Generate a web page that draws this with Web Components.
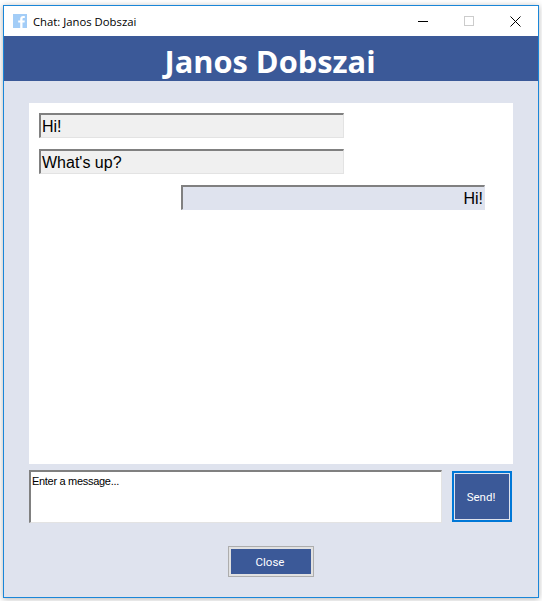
<!DOCTYPE html>
<html>
<head>
<meta charset="utf-8">
<title>Chat: Janos Dobszai</title>
<style>
  html, body { margin: 0; height: 100%; background: #fff; overflow: hidden; }
</style>
</head>
<body>
<chat-window title-text="Chat: Janos Dobszai" contact="Janos Dobszai">
  <chat-bubble>Hi!</chat-bubble>
  <chat-bubble>What's up?</chat-bubble>
  <chat-bubble own>Hi!</chat-bubble>
</chat-window>

<script>
class TitleBar extends HTMLElement {
  connectedCallback() {
    this.attachShadow({ mode: 'open' });
    this.shadowRoot.innerHTML = `
      <style>
        :host {
          display: flex;
          align-items: center;
          height: 30px;
          background: #fff;
          color: #000;
          font: 11.3px "Open Sans", "Noto Sans", sans-serif;
        }
        .icon { width: 14px; height: 14px; margin-left: 9px; margin-right: 6px; flex: none; }
        .text { flex: 1; padding-top: 1px; }
        .buttons { display: flex; }
        .btn { width: 46px; height: 30px; display: flex; align-items: center; justify-content: center; }
      </style>
      <svg class="icon" viewBox="0 0 14 14">
        <rect width="14" height="14" fill="#a3cdf7"/>
        <path d="M9.500 14V8.600h2l.3-2.200H9.500V5.100c0-.7.3-1.100 1.100-1.100h1.200V2.100c-.4-.1-1-.1-1.600-.1C8.400 2 7.200 3 7.200 4.900v1.500h-2v2.200h2V14z" fill="#fff"/>
      </svg>
      <span class="text"><slot></slot></span>
      <div class="buttons">
        <div class="btn"><svg width="10" height="10" viewBox="0 0 10 10"><path d="M0 5.500h10" stroke="#000" fill="none"/></svg></div>
        <div class="btn"><svg width="10" height="10" viewBox="0 0 10 10"><rect x=".5" y=".5" width="9" height="9" stroke="#ccc" fill="none"/></svg></div>
        <div class="btn"><svg width="11" height="11" viewBox="0 0 11 11"><path d="M.5.500l10 10M10.500.500l-10 10" stroke="#000" fill="none"/></svg></div>
      </div>
    `;
  }
}

class ChatBubble extends HTMLElement {
  connectedCallback() {
    this.attachShadow({ mode: 'open' });
    this.shadowRoot.innerHTML = `
      <style>
        :host {
          display: block;
          box-sizing: border-box;
          width: 305px;
          height: 25px;
          padding: 0 1px 0 1px;
          border-style: solid;
          border-width: 2px 1px 1px 2px;
          border-color: #808080 #e3e3e3 #e3e3e3 #808080;
          background: #f0f0f0;
          color: #000;
          font: 16px/23px "Liberation Sans", Arial, sans-serif;
        }
        :host([own]) {
          align-self: flex-end;
          width: 304px;
          margin-right: 18px;
          text-align: right;
          background: #dfe3ee;
          border-color: #808080 #dfe3ee #dfe3ee #808080;
        }
      </style>
      <slot></slot>
    `;
  }
}

class FlatButton extends HTMLElement {
  connectedCallback() {
    this.attachShadow({ mode: 'open' });
    this.shadowRoot.innerHTML = `
      <style>
        :host {
          display: flex;
          align-items: center;
          justify-content: center;
          box-sizing: border-box;
          padding-right: 2px;
          background: #3b5998;
          color: #fff;
          font: 11.5px Roboto, "Open Sans", sans-serif;
        }
      </style>
      <slot></slot>
    `;
  }
}

class ChatWindow extends HTMLElement {
  connectedCallback() {
    const title = this.getAttribute('title-text');
    const contact = this.getAttribute('contact');
    this.attachShadow({ mode: 'open' });
    this.shadowRoot.innerHTML = `
      <style>
        :host {
          display: flex;
          flex-direction: column;
          box-sizing: border-box;
          width: 536px;
          height: 593px;
          margin: 5px 0 0 3px;
          border: 1px solid #1a86d8;
          background: #dfe3ee;
          box-shadow: 0 1px 6px rgba(0, 0, 0, .3);
        }
        header {
          height: 45px;
          padding-right: 2px;
          background: #3b5998;
          color: #fff;
          text-align: center;
          font: bold 30.8px/50px "Open Sans", "Noto Sans", sans-serif;
          margin-bottom: 22px;
        }
        .log {
          display: flex;
          flex-direction: column;
          gap: 11px;
          box-sizing: border-box;
          width: 484px;
          height: 361px;
          margin-left: 25px;
          padding: 10px;
          background: #fff;
        }
        .compose {
          display: flex;
          margin: 6px 0 0 25px;
        }
        .input {
          box-sizing: border-box;
          width: 413px;
          height: 53px;
          padding: 2px 1px;
          border-style: solid;
          border-width: 2px 1px 1px 2px;
          border-color: #808080 #e3e3e3 #e3e3e3 #808080;
          background: #fff;
          color: #000;
          font: 11px/14px "Liberation Sans", Arial, sans-serif;
          letter-spacing: -0.3px;
        }
        .send {
          width: 60px;
          height: 51px;
          margin: 1px 0 0 10px;
          border: 2px solid #0078d7;
          outline: 1px solid #dfe3ee;
          outline-offset: -3px;
        }
        .foot {
          display: flex;
          justify-content: center;
          margin-top: 23px;
        }
        .close {
          width: 86px;
          height: 31px;
          border: 3px solid #e1e1e1;
          outline: 1px solid #adadad;
          outline-offset: -1px;
        }
      </style>
      <title-bar>${title}</title-bar>
      <header>${contact}</header>
      <div class="log"><slot></slot></div>
      <div class="compose">
        <div class="input">Enter a message...</div>
        <flat-button class="send">Send!</flat-button>
      </div>
      <div class="foot"><flat-button class="close">Close</flat-button></div>
    `;
  }
}

customElements.define('title-bar', TitleBar);
customElements.define('chat-bubble', ChatBubble);
customElements.define('flat-button', FlatButton);
customElements.define('chat-window', ChatWindow);
</script>
</body>
</html>
